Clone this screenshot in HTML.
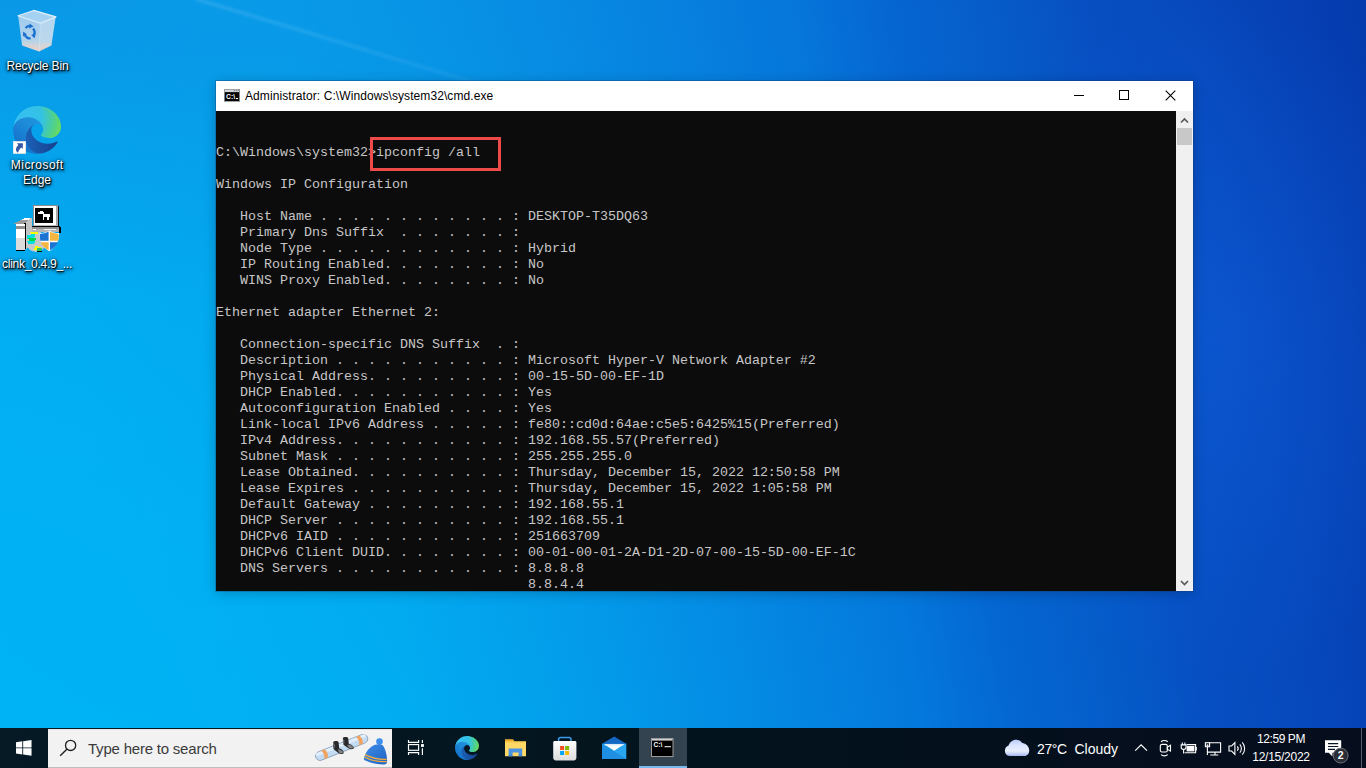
<!DOCTYPE html>
<html lang="en">
<head>
<meta charset="utf-8">
<title>Administrator: C:\Windows\system32\cmd.exe</title>
<style>
*{box-sizing:border-box;margin:0;padding:0}
html,body{width:1366px;height:768px;overflow:hidden}
body{position:relative;font-family:"Liberation Sans","DejaVu Sans",sans-serif;background:#0a5ec8;}
#wall{position:absolute;left:0;top:0;width:1366px;height:768px;
 background:
  radial-gradient(ellipse 260px 340px at 1215px 340px,rgba(20,105,235,.34),rgba(20,105,235,0) 100%),
  radial-gradient(ellipse 2000px 760px at 0 0,rgba(30,90,200,.30) 0,rgba(30,90,200,.22) 15%,rgba(30,90,200,.07) 40%,rgba(30,90,200,.025) 70%,rgba(30,90,200,0) 100%),
  linear-gradient(80deg,#00b4f5 0%,#00b3f4 10%,#02acf1 28%,#039bea 41%,#0484e1 54.600%,#0478dc 62%,#0467d2 68%,#055cc9 75%,#064fc2 81%,#0648bc 88.500%,#053fb3 95%,#043aac 100%);}
.dicon{position:absolute;width:76px;text-align:center;color:#fff;font-size:12px;line-height:15px;
 text-shadow:1px 1px 1px rgba(0,0,0,.95),0 1px 3px rgba(0,0,0,.9),1px 2px 3px rgba(0,0,0,.6),0 0 4px rgba(0,0,0,.5)}
.dicon svg{display:block;margin:0 auto}
#win{position:absolute;left:216px;top:81px;width:977px;height:510px;background:#0c0c0c;
 box-shadow:0 0 0 1px rgba(20,60,110,.32),0 2px 12px rgba(0,0,0,.22)}
#tbar{position:absolute;left:0;top:0;width:977px;height:30px;background:#fff}
#tbar .ttl{position:absolute;left:29px;top:0;height:30px;line-height:30px;font-size:12px;letter-spacing:.085px;color:#000;white-space:nowrap}
#term{position:absolute;left:0;top:30px;width:960px;height:480px;overflow:hidden;background:#0c0c0c}
#term pre{font-family:"Liberation Mono","DejaVu Sans Mono",monospace;font-size:13.3333px;line-height:16px;color:#c6c6c6;white-space:pre;position:relative;top:2px}
#sb{position:absolute;left:960px;top:30px;width:17px;height:480px;background:#f0f0f0}
#hl{position:absolute;left:154px;top:56px;width:131px;height:34px;border:3px solid #ee4a4a}
#task{position:absolute;left:0;top:728px;width:1366px;height:40px;background:linear-gradient(90deg,#051a25 0%,#04161f 35%,#03121c 60%,#050f1d 80%,#060e1d 100%)}
#search{position:absolute;left:48px;top:1px;width:344px;height:39px;background:#f2f2f2;border-bottom:1px solid #bdbdbd;border-top:1px solid #e6e6e6}
#search .ph{position:absolute;left:40px;top:-1.500px;line-height:39px;font-size:15px;letter-spacing:-.21px;color:#3b3b3b;white-space:nowrap}
.tray{position:absolute;color:#fff;font-size:12px;white-space:nowrap}
</style>
</head>
<body>
<div id="wall"><div style="position:absolute;left:196px;top:-3px;width:300px;height:4px;transform-origin:0 50%;transform:rotate(16.700deg);background:linear-gradient(90deg,rgba(170,225,255,.16),rgba(170,225,255,.11) 60%,rgba(170,225,255,.06));filter:blur(1px)"></div></div>

<!-- desktop icons -->
<svg style="position:absolute;left:13px;top:8px" width="48" height="48" viewBox="0 0 48 48">
 <defs>
  <linearGradient id="rbL" x1="0" y1="0" x2="0" y2="1"><stop offset="0" stop-color="#9fcbee"/><stop offset=".7" stop-color="#b4d3ea"/><stop offset=".85" stop-color="#d9d3d3"/><stop offset="1" stop-color="#e6d3c8"/></linearGradient>
  <linearGradient id="rbR" x1="0" y1="0" x2="0" y2="1"><stop offset="0" stop-color="#b3d6f0"/><stop offset=".7" stop-color="#bcd8ec"/><stop offset=".88" stop-color="#dcd4d2"/><stop offset="1" stop-color="#e3cfc6"/></linearGradient>
 </defs>
 <path d="M5.200 8.200L27.300 15 38.400 9.300 34.400 37.600 26 43.400 9.100 37.600z" fill="url(#rbL)"/>
 <path d="M27.300 15L42.700 9 38.400 37.600 26 43.400z" fill="url(#rbR)"/>
 <path d="M5 7.800L20.800 2.400 43 8.900 27.300 15.200z" fill="#a5d2f3" stroke="#e4f1fb" stroke-width="1.1" stroke-linejoin="round"/>
 <path d="M5.200 8.200L27.300 15.200 26.300 43" fill="none" stroke="#d4e8f7" stroke-width=".7" opacity=".7"/>
 <g fill="none" stroke="#1c72d0" stroke-width="2.300">
  <path d="M12.600 20.200c1.200-1.900 3.400-2.800 5.600-2"/>
  <path d="M20 20.600c1.700 1.800 2 4.600.4 6.800"/>
  <path d="M17.600 30.200c-2.400.6-4.900-.9-5.900-3.500"/>
 </g>
 <g fill="#1c72d0"><path d="M16.600 15.400l4 3.200-4.600 1.800z"/><path d="M22.800 25.600l-1.200 4.900-3.400-3.400z"/><path d="M9.800 28.400l.4-5 3.800 2.800z"/></g>
</svg>
<div class="dicon" style="left:-.5px;top:59px;letter-spacing:-.12px">Recycle Bin</div>

<svg style="position:absolute;left:13px;top:106px" width="48" height="48" viewBox="0 0 256 256">
 <defs>
  <linearGradient id="eA" x1="63" y1="180" x2="242" y2="180" gradientUnits="userSpaceOnUse"><stop offset="0" stop-color="#1b62b8"/><stop offset="1" stop-color="#163f8c"/></linearGradient>
  <linearGradient id="eC" x1="160" y1="100" x2="48" y2="222" gradientUnits="userSpaceOnUse"><stop offset="0" stop-color="#1e95de"/><stop offset=".5" stop-color="#1d86d6"/><stop offset="1" stop-color="#1473cc"/></linearGradient>
  <radialGradient id="eE" cx="40" cy="70" r="250" gradientUnits="userSpaceOnUse"><stop offset="0" stop-color="#36bff2"/><stop offset=".45" stop-color="#33c1e6"/><stop offset=".72" stop-color="#4fd18c"/><stop offset=".9" stop-color="#72dc4f"/><stop offset="1" stop-color="#76dd4a"/></radialGradient>
 </defs>
 <path d="M231 190.500c-3.400 1.800-6.900 3.400-10.500 4.700a101.700 101.700 0 0 1-35.600 6.400c-47 0-87.900-32.300-87.900-73.800a31.300 31.300 0 0 1 16.300-27.100c-42.500 1.800-53.400 46.100-53.400 72 0 73.400 67.600 80.800 82.200 80.800 7.900 0 19.700-2.300 26.900-4.500l1.300-.4a128 128 0 0 0 66.300-52.600 4 4 0 0 0-5.300-5.600z" fill="url(#eA)"/>
 <path d="M105.700 241.400a79.200 79.200 0 0 1-22.700-21.300 80.700 80.700 0 0 1 29.500-119.900c3.200-1.500 8.500-4.100 15.600-4a32.400 32.400 0 0 1 25.700 13 31.900 31.900 0 0 1 6.300 18.700c0-.2 24.500-79.600-80-79.600-43.900 0-80 41.600-80 78.200a130.200 130.200 0 0 0 12.100 56 128 128 0 0 0 156.400 67.100 75.500 75.500 0 0 1-62.800-8.200z" fill="url(#eC)"/>
 <path d="M152.300 148.900c-.9 1-3.400 2.500-3.400 5.600 0 2.600 1.700 5.200 4.800 7.300 14.300 10 41.400 8.600 41.500 8.600a59.600 59.600 0 0 0 30.300-8.300 61.400 61.400 0 0 0 30.400-52.900c.3-22.400-8-37.300-11.300-43.900-21.200-41.200-66.700-64.900-116.200-64.900a128 128 0 0 0-128 126.200c.5-36.500 36.800-66 80-66 3.500 0 23.500.3 42 10a72.600 72.600 0 0 1 30.900 29.300c6.100 10.600 7.200 24.100 7.200 29.500s-2.700 13.300-8.300 19.600z" fill="url(#eE)"/>
</svg>
<svg style="position:absolute;left:13px;top:141px" width="13" height="13" viewBox="0 0 13 13">
 <rect x=".2" y=".3" width="12.600" height="12.300" fill="#fff" stroke="#f3e3d3" stroke-width=".5"/>
 <path d="M3.900 2.300L9.900 2.200 9.800 7.900 8.400 6.400C7 7.300 6 8.800 5.900 9.600 5.600 10.400 5.200 11.200 4.700 11.700 3.400 10.600 2.800 9.300 3 8 3.200 6.400 4.200 5 5.400 3.900z" fill="#3458a5"/>
</svg>
<div class="dicon" style="left:-1px;top:158px"><span style="letter-spacing:.45px;margin-left:.45px">Microsoft</span><br>Edge</div>

<svg style="position:absolute;left:13px;top:205px" width="48" height="48" viewBox="0 0 48 48" shape-rendering="crispEdges">
 <!-- package box -->
 <path d="M0 18.800L12 12.800h7.300v2.200L12.500 19.200H1z" fill="#9a9a9a"/>
 <path d="M12 12.800h7.300v1.700H9.500z" fill="#fff"/>
 <rect x="3" y="18.500" width="8.500" height="2.500" fill="#fff"/>
 <rect x="3" y="21" width="8.500" height="3" fill="#8f8f8f"/>
 <rect x="3" y="24" width="8.500" height="9" fill="#fff"/>
 <rect x="3" y="33" width="8.500" height="12" fill="#dcdcdc"/>
 <path d="M11.500 18.500L13 17.200V44l-1.500 1.300z" fill="#000"/>
 <path d="M13 17.200L18.500 12.500V41L13 44z" fill="#c3c3c3"/>
 <path d="M3 45h8.500v1H3z" fill="#000"/>
 <!-- disc -->
 <ellipse cx="23" cy="36.500" rx="10" ry="10.500" fill="#c9c9c9" shape-rendering="auto"/>
 <path d="M17 27l7-1.500 1 3 -6 2z" fill="#ffff00"/>
 <path d="M13.500 30l9-1 -1 3.500 -7 1z" fill="#00e0e0"/>
 <path d="M15 33l8 .5 -1 3 -6-1z" fill="#00d848"/>
 <path d="M14 35.500l8 1 -1 2.500 -6-.5z" fill="#00e0e0"/>
 <path d="M22 41l6 1 -1 4 -6-1z" fill="#ffff00"/>
 <path d="M24 43l5 .5 -1 3 -4-.5z" fill="#30c860"/>
 <rect x="24" y="46" width="5" height="1.200" fill="#000"/>
 <!-- monitor -->
 <rect x="19.700" y=".400" width="25.400" height="21" fill="#8c8c8c"/>
 <rect x="20.800" y=".900" width="22.200" height="19.200" fill="#fff"/>
 <rect x="43" y=".900" width="2.100" height="20.400" fill="#a9a9a9"/>
 <rect x="20.800" y="20" width="22.200" height="1.300" fill="#bdbdbd"/>
 <rect x="22.100" y="3.100" width="17.900" height="14.800" fill="#000"/>
 <path d="M24.800 7h1.800V5.800H30V7h1v1.600h6V12h-.9v2.900h-2.200V12H31v2.900h-1.100v-6h-5.100z" fill="#fff"/>
 <rect x="45.100" y="1" width="1.100" height="20.400" fill="#101010"/>
 <rect x="19" y="21.300" width="27.500" height=".9" fill="#000"/>
 <rect x="19" y="22.200" width="27" height="1.600" fill="#8f8f8f"/>
 <rect x="19" y="23.800" width="27" height="3.200" fill="#b5b5b5"/>
 <rect x="20" y="24" width="3" height="1.300" fill="#fff"/><rect x="31" y="24" width="12" height="1.300" fill="#f2f2f2"/>
 <rect x="45.800" y="21.600" width="1.900" height="6" fill="#000"/>
 <!-- shield -->
 <g shape-rendering="auto">
  <path d="M36.300 25.400c3 1.800 6.300 2.500 9.800 2.600 .3 8.500-3.300 14.800-9.800 18.200 -6.500-3.400-10.100-9.700-9.800-18.200 3.500-.1 6.800-.8 9.800-2.600z" fill="#fff"/>
  <path d="M35.600 26.600v9.200h-8.300c-.4-2.100-.5-4.300-.4-6.900 3.100-.1 6-.8 8.700-2.300z" fill="#1b74d1"/>
  <path d="M37 26.600c2.700 1.500 5.600 2.200 8.700 2.300 .1 2.600 0 4.800-.4 6.900H37z" fill="#f6b540"/>
  <path d="M35.600 37.200v8c-4.200-2.300-6.800-5-8-8z" fill="#f6b540"/>
  <path d="M37 37.200h8c-1.200 3-3.800 5.700-8 8z" fill="#1b74d1"/>
 </g>
</svg>
<div class="dicon" style="left:-1px;top:257px;letter-spacing:-.27px">clink_0.4.9_...</div>

<!-- cmd window -->
<div id="win">
 <div id="tbar">
  <svg style="position:absolute;left:8px;top:8px" width="16" height="14" viewBox="0 0 16 14">
   <rect x="0" y="0" width="16" height="12.800" fill="#8f9193"/>
   <rect x=".8" y=".7" width="14.400" height="2.300" fill="#d3d7da"/>
   <rect x="9.800" y="1.200" width="1" height="1" fill="#5d6064"/><rect x="11.800" y="1.200" width="1" height="1" fill="#5d6064"/><rect x="13.800" y="1.200" width="1" height="1" fill="#5d6064"/>
   <rect x=".9" y="3.200" width="14.200" height="8.800" fill="#000"/>
   <text x="1.900" y="10.100" font-family="Liberation Sans,sans-serif" font-weight="bold" font-size="6.800" letter-spacing=".15" fill="#fff">C:\</text>
   <rect x="12" y="9" width="2.100" height="1.100" fill="#fff"/>
  </svg>
  <div class="ttl">Administrator: C:\Windows\system32\cmd.exe</div>
  <svg style="position:absolute;left:840px;top:0" width="137" height="30" viewBox="0 0 137 30">
   <g stroke="#000" stroke-width="1" fill="none" shape-rendering="crispEdges">
    <path d="M18 14.5h10"/>
    <rect x="63.5" y="9.5" width="9" height="9"/>
   </g>
   <path d="M109.7 9.7l9.6 9.6M119.3 9.7l-9.6 9.6" stroke="#000" stroke-width="1.1" fill="none"/>
  </svg>
 </div>
 <div id="term"><pre>


C:\Windows\system32&gt;ipconfig /all

Windows IP Configuration

   Host Name . . . . . . . . . . . . : DESKTOP-T35DQ63
   Primary Dns Suffix  . . . . . . . :
   Node Type . . . . . . . . . . . . : Hybrid
   IP Routing Enabled. . . . . . . . : No
   WINS Proxy Enabled. . . . . . . . : No

Ethernet adapter Ethernet 2:

   Connection-specific DNS Suffix  . :
   Description . . . . . . . . . . . : Microsoft Hyper-V Network Adapter #2
   Physical Address. . . . . . . . . : 00-15-5D-00-EF-1D
   DHCP Enabled. . . . . . . . . . . : Yes
   Autoconfiguration Enabled . . . . : Yes
   Link-local IPv6 Address . . . . . : fe80::cd0d:64ae:c5e5:6425%15(Preferred)
   IPv4 Address. . . . . . . . . . . : 192.168.55.57(Preferred)
   Subnet Mask . . . . . . . . . . . : 255.255.255.0
   Lease Obtained. . . . . . . . . . : Thursday, December 15, 2022 12:50:58 PM
   Lease Expires . . . . . . . . . . : Thursday, December 15, 2022 1:05:58 PM
   Default Gateway . . . . . . . . . : 192.168.55.1
   DHCP Server . . . . . . . . . . . : 192.168.55.1
   DHCPv6 IAID . . . . . . . . . . . : 251663709
   DHCPv6 Client DUID. . . . . . . . : 00-01-00-01-2A-D1-2D-07-00-15-5D-00-EF-1C
   DNS Servers . . . . . . . . . . . : 8.8.8.8
                                       8.8.4.4
</pre></div>
 <div id="hl"></div>
 <div id="sb">
  <div style="position:absolute;left:1px;top:17px;width:15px;height:17px;background:#c8c8c8"></div>
  <svg style="position:absolute;left:0;top:0" width="17" height="480" viewBox="0 0 17 480">
   <path d="M5 11.5l3.5-3.5l3.5 3.5" stroke="#555" stroke-width="1.6" fill="none"/>
   <path d="M5 470l3.5 3.5l3.5-3.5" stroke="#555" stroke-width="1.6" fill="none"/>
  </svg>
 </div>
</div>

<!-- taskbar -->
<div id="task">
 <!-- start -->
 <svg style="position:absolute;left:16px;top:12px" width="16" height="16" viewBox="0 0 17 17">
  <path d="M0 2.300L6.700 1.400v6.500H0zM7.600 1.300L16.500 0v7.900H7.600zM0 8.800h6.700v6.500L0 14.400zM7.600 8.800h8.900v7.900L7.600 15.400z" fill="#fff"/>
 </svg>
 <!-- search -->
 <div id="search">
  <svg style="position:absolute;left:10px;top:7.800px" width="22" height="22" viewBox="0 0 22 22">
   <circle cx="12.600" cy="7.400" r="5.100" fill="none" stroke="#1f1f1f" stroke-width="1.300"/>
   <path d="M9.100 11.100L2.200 17.800" stroke="#1f1f1f" stroke-width="1.400" fill="none"/>
  </svg>
  <div class="ph">Type here to search</div>
  <!-- snowboard + beanie -->
  <svg style="position:absolute;left:262px;top:4px" width="82" height="35" viewBox="0 0 82 35">
   <defs>
    <linearGradient id="hatG" x1="0" y1="0" x2="1" y2="1"><stop offset="0" stop-color="#3d8de6"/><stop offset="1" stop-color="#1f62c4"/></linearGradient>
   </defs>
   <g transform="translate(31.600 13.200) rotate(-21.600)">
    <rect x="-27.800" y="-4.300" width="55.600" height="9" rx="4.500" fill="#c3dbf3" stroke="#5a7391" stroke-width=".5"/>
    <rect x="-27" y="-3.900" width="54" height="3.200" rx="1.600" fill="#e6f1fb" opacity=".85"/>
    <path d="M-20.500 -4.200c1.900 2.800 1.900 5.800 0 8.800h3.800c1.900-3 1.900-6 0-8.800zM17 -4.200c1.900 2.800 1.900 5.800 0 8.800h3.800c1.900-3 1.900-6 0-8.800z" fill="#f2a25c"/>
   </g>
   <path d="M23.300 8.200c.3-1.300 4.700-1.500 5.200-.2l.8 6.600c2.600.4 4.400 2.200 4.400 4.200 0 1.300-2.600 1.500-4.600.8l-4.200-3.400c-1.200-.9-1.700-2-1.700-3.400z" fill="#2a2a2c"/>
   <path d="M32.900 4.200c.3-1.300 4.700-1.500 5.200-.2l.8 6c2.800.4 4.900 2.100 4.900 4 0 1.300-2.700 1.500-4.700.8l-4.500-3.200c-1.200-.9-1.700-2-1.700-3.400z" fill="#2a2a2c"/>
   <path d="M27.600 15.600c2.400-.6 5 .8 5.800 3 -1 .9-3 .8-4.300.2z" fill="#7f8184"/>
   <path d="M37.200 10.900c2.500-.6 5.400.7 6.200 2.900 -1 .9-3.200.8-4.500.2z" fill="#7f8184"/>
   <path d="M23.800 9.500c.6 1.800.6 3.600-.2 5.200M33.400 5.500c.6 1.800.6 3.600-.2 5.200" stroke="#8d8f92" stroke-width=".9" fill="none"/>
   <circle cx="69.500" cy="7.600" r="3.300" fill="#3c8fea"/>
   <path d="M53.900 24.600c1.600-6.600 5.800-12 11.300-13.800 2.800-.9 5.600-.7 7.600 .4 2.600 3.600 4 9 4.300 14.900 .3 2.800-.6 4.300-2.900 4.400 -6.400 .3-14.800-1.900-19.500-4.200 -.7-.4-1-.9-.8-1.700z" fill="url(#hatG)"/>
   <path d="M55.200 20.600c6 3.200 14.500 5.100 21.400 4.800M54.500 23c6 3.300 15 5 22.300 4.600" fill="none" stroke="#f4ad3c" stroke-width="1.300"/>
  </svg>
 </div>
 <!-- task view -->
 <svg style="position:absolute;left:407px;top:11px" width="18" height="18" viewBox="0 0 18 18">
  <g fill="none" stroke="#fff" stroke-width="1.150">
   <rect x="1.500" y="5.600" width="10.100" height="5.700"/>
   <path d="M1.500 1v2.400h10.100V1M1.500 16v-2.400h10.100V16M15.400 1v2.900M15.400 9.200V16"/>
  </g>
  <rect x="14" y="5.100" width="2.900" height="2.800" fill="#fff"/>
 </svg>
 <!-- edge -->
 <svg style="position:absolute;left:455px;top:8px" width="24" height="24" viewBox="0 0 256 256">
  <path d="M231 190.500c-3.400 1.800-6.900 3.400-10.500 4.700a101.700 101.700 0 0 1-35.600 6.400c-47 0-87.900-32.300-87.900-73.800a31.300 31.300 0 0 1 16.300-27.100c-42.500 1.800-53.400 46.100-53.400 72 0 73.400 67.600 80.800 82.200 80.800 7.900 0 19.700-2.300 26.900-4.500l1.300-.4a128 128 0 0 0 66.300-52.600 4 4 0 0 0-5.300-5.600z" fill="url(#eA)"/>
  <path d="M105.700 241.400a79.200 79.200 0 0 1-22.700-21.300 80.700 80.700 0 0 1 29.500-119.900c3.200-1.500 8.500-4.100 15.600-4a32.400 32.400 0 0 1 25.700 13 31.900 31.900 0 0 1 6.300 18.700c0-.2 24.500-79.600-80-79.600-43.900 0-80 41.600-80 78.200a130.200 130.200 0 0 0 12.100 56 128 128 0 0 0 156.400 67.100 75.500 75.500 0 0 1-62.800-8.200z" fill="url(#eC)"/>
  <path d="M152.300 148.900c-.9 1-3.400 2.500-3.400 5.600 0 2.600 1.700 5.200 4.800 7.300 14.300 10 41.400 8.600 41.500 8.600a59.600 59.600 0 0 0 30.300-8.300 61.400 61.400 0 0 0 30.400-52.900c.3-22.400-8-37.300-11.300-43.900-21.200-41.200-66.700-64.900-116.200-64.900a128 128 0 0 0-128 126.200c.5-36.500 36.800-66 80-66 3.500 0 23.500.3 42 10a72.600 72.600 0 0 1 30.900 29.300c6.100 10.600 7.200 24.100 7.200 29.500s-2.700 13.300-8.300 19.600z" fill="url(#eE)"/>
 </svg>
 <!-- explorer -->
 <svg style="position:absolute;left:504px;top:10px" width="24" height="20" viewBox="0 0 24 20">
  <path d="M1 1.600h8l1.400 1.800H22v14.800H1z" fill="#ffd865"/>
  <path d="M1 1.600h8l1.400 1.800H1z" fill="#eea727"/>
  <rect x="1" y="3.400" width="21" height="1" fill="#f6c548"/>
  <path d="M4.600 10.600h13.600v7.600h-3.600v-3.800H8.600v3.800h-4z" fill="#4a93e3"/>
  <rect x="4.600" y="17.400" width="4" height=".8" fill="#2f74c7"/><rect x="14.600" y="17.400" width="3.600" height=".8" fill="#2f74c7"/>
 </svg>
 <!-- store -->
 <svg style="position:absolute;left:552px;top:8px" width="26" height="26" viewBox="0 0 26 26">
  <defs><linearGradient id="bagG" x1="0" y1="0" x2="0" y2="1"><stop offset="0" stop-color="#ffffff"/><stop offset="1" stop-color="#dcdcdc"/></linearGradient></defs>
  <path d="M6.600 7V3.300c0-1.200.7-1.900 1.900-1.900h8.600c1.200 0 1.900.7 1.900 1.900V7" fill="none" stroke="#3a9bea" stroke-width="1.500"/>
  <path d="M1.200 6.400c0-.9.600-1.500 1.500-1.500h20.200c.9 0 1.500.6 1.500 1.500v15.400c0 1.600-1.100 2.700-2.700 2.700H3.900c-1.600 0-2.700-1.100-2.700-2.700z" fill="url(#bagG)"/>
  <rect x="8.100" y="10" width="4" height="4" fill="#f25022"/><rect x="13.100" y="10" width="4" height="4" fill="#7fba00"/>
  <rect x="8.100" y="15" width="4" height="4" fill="#00a4ef"/><rect x="13.100" y="15" width="4" height="4" fill="#ffb900"/>
 </svg>
 <!-- mail -->
 <svg style="position:absolute;left:601px;top:8px" width="26" height="24" viewBox="0 0 26 24">
  <path d="M1 7.800L13.200.4 25.300 7.800v.6H1z" fill="#1666c3"/>
  <path d="M1 7.800h24.300V23H1z" fill="#29a6ef"/>
  <path d="M1 7.800L25.300 23H1z" fill="#1e8fe2"/>
  <path d="M3.400 8.200h19.600L13.200 14.800z" fill="#fff"/>
  <path d="M3.400 8.200h19.600l-.8 1.200H4.200z" fill="#dfe9f3"/>
 </svg>
 <!-- cmd (active) -->
 <div style="position:absolute;left:639px;top:0;width:48px;height:40px;background:#33434f"></div>
 <div style="position:absolute;left:639px;top:38px;width:48px;height:2px;background:#76b9ed"></div>
 <svg style="position:absolute;left:651px;top:10px" width="23" height="19" viewBox="0 0 23 19">
  <rect x=".5" y=".5" width="21.500" height="18" fill="#000" stroke="#9b9b9b" stroke-width="1"/>
  <rect x="1" y="1" width="20.500" height="1.600" fill="#cfcfcf"/>
  <text x="2.600" y="9" font-family="Liberation Sans,sans-serif" font-size="6.500" font-weight="bold" fill="#fff">C:\</text>
  <rect x="13.500" y="8.200" width="6.500" height="1" fill="#fff"/>
 </svg>

 <!-- weather -->
 <svg style="position:absolute;left:1004px;top:11px" width="26" height="18" viewBox="0 0 26 18">
  <defs><linearGradient id="clG" x1="0" y1="0" x2="0" y2="1"><stop offset="0" stop-color="#b9cbfb"/><stop offset=".35" stop-color="#dbe5fd"/><stop offset=".7" stop-color="#e8eefd"/><stop offset=".88" stop-color="#c3d0f7"/><stop offset="1" stop-color="#a3b4ef"/></linearGradient></defs>
  <path d="M5.500 16.900C2.600 16.900.9 14.500.9 11.600.9 9 2.600 7.200 4.600 6.600 5.600 3.200 8.500.8 12 .8c2.600 0 4.800 1.200 6.200 3.100 3.800.3 7 3.500 7 7.500 0 3.200-2 5.500-4.700 5.500z" fill="url(#clG)"/>
 </svg>
 <div class="tray" style="left:1037px;top:11.500px;font-size:14px;line-height:18px;letter-spacing:-.35px">27°C</div>
 <div class="tray" style="left:1074.500px;top:11.500px;font-size:14px;line-height:18px">Cloudy</div>
 <svg style="position:absolute;left:1134px;top:15px" width="14" height="9" viewBox="0 0 14 9"><path d="M1.200 7.700L7.100 1.800 13 7.700" fill="none" stroke="#fff" stroke-width="1.200"/></svg>
 <!-- meet now -->
 <svg style="position:absolute;left:1158px;top:11px" width="15" height="18" viewBox="0 0 15 18">
  <g fill="none" stroke="#fff" stroke-width="1.100">
   <rect x="2.300" y="5.400" width="7" height="7.600" rx="1.600"/>
   <path d="M9.300 8.300l3.200-2v5.800l-3.200-2z"/>
   <path d="M3 2.800c2-1.500 4.700-1.500 6.800 0M3 15.600c2 1.500 4.700 1.500 6.800 0"/>
  </g>
 </svg>
 <!-- battery -->
 <svg style="position:absolute;left:1180px;top:14px" width="18" height="12" viewBox="0 0 18 12">
  <g fill="none" stroke="#fff" stroke-width="1.100">
   <path d="M2.300 .6v2.200M4.900 .6v2.200M1.200 2.900h4.800v2.300c0 1.300-1 2.200-2.400 2.200s-2.400-.9-2.400-2.200zM3.600 7.400v4"/>
   <path d="M6.600 2.600h9v8.200H4.600"/>
   <path d="M16.300 5v3.400"/>
  </g>
  <rect x="6.600" y="4" width="7.800" height="5.400" fill="#fff"/>
 </svg>
 <!-- network -->
 <svg style="position:absolute;left:1204px;top:13px" width="18" height="15" viewBox="0 0 18 15">
  <g fill="none" stroke="#fff" stroke-width="1.100">
   <path d="M5.600 1.700h11v9.400H3.400"/>
   <path d="M11 11.100v2.700M6.300 14h8"/>
   <rect x="1.400" y="1.700" width="4.200" height="4"/>
   <path d="M3.400 5.700V14"/>
  </g>
  <rect x="2.600" y="3.400" width="1.800" height="1.600" fill="#fff"/>
 </svg>
 <!-- volume -->
 <svg style="position:absolute;left:1228px;top:13px" width="19" height="15" viewBox="0 0 19 15">
  <g fill="none" stroke="#fff" stroke-width="1.100">
   <path d="M1 5h2.600L6.900 1.600v11.800L3.600 10H1z"/>
   <path d="M9.300 5.300c1.100 1.300 1.100 3.100 0 4.400M11.800 3.300c2.100 2.300 2.100 6.100 0 8.400M14.300 1.300c3.100 3.400 3.100 9 0 12.400"/>
  </g>
 </svg>
 <!-- clock -->
 <div class="tray" style="left:1231px;top:3.500px;width:100px;text-align:center;line-height:15px;letter-spacing:-.42px">12:59 PM</div>
 <div class="tray" style="left:1231px;top:21.500px;width:100px;text-align:center;line-height:15px;letter-spacing:-.25px">12/15/2022</div>
 <!-- notifications -->
 <svg style="position:absolute;left:1324px;top:11px" width="26" height="25" viewBox="0 0 26 25">
  <path d="M1 1.200h16.200v12.600H8.400v3.600L4.800 13.800H1z" fill="#fff"/>
  <path d="M4 4.600h10.200M4 7.500h10.200M4 10.400h7" stroke="#0a1626" stroke-width="1.100"/>
  <circle cx="16.700" cy="16.600" r="7.400" fill="#2b2e36" stroke="#6b6f78" stroke-width="1"/>
  <text x="16.700" y="20.400" text-anchor="middle" font-family="Liberation Sans,sans-serif" font-weight="bold" font-size="10.500" fill="#fff">2</text>
 </svg>
 <div style="position:absolute;left:1361px;top:0;width:1px;height:40px;background:#56616e"></div>
</div>
</body>
</html>
